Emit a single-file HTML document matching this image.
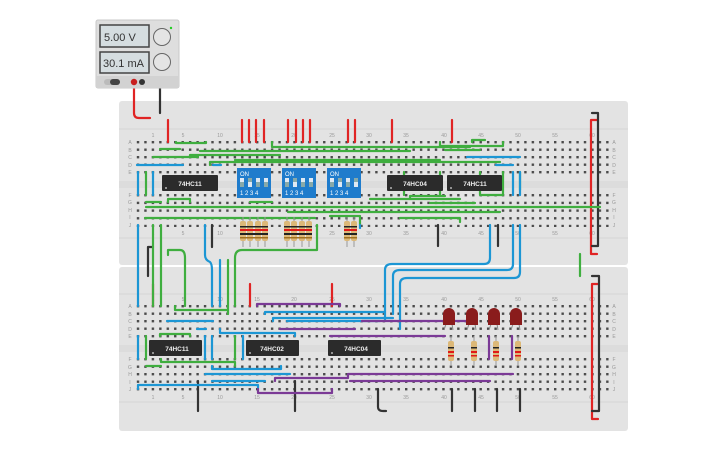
<!DOCTYPE html>
<html><head><meta charset="utf-8"><style>
html,body{margin:0;padding:0;background:#fff;width:725px;height:453px;overflow:hidden}
svg{display:block}
text{font-family:"Liberation Sans",sans-serif}
</style></head><body>
<svg width="725" height="453" viewBox="0 0 725 453" xmlns="http://www.w3.org/2000/svg">
<defs>
<pattern id="hp" patternUnits="userSpaceOnUse" x="136.8" y="141" width="7.45" height="7.5"><rect x="0" y="0" width="2.4" height="2.4" fill="#4a4a4a"/></pattern>
<pattern id="rp" patternUnits="userSpaceOnUse" x="152.8" y="0" width="45.3" height="453"><rect x="0" y="0" width="2.4" height="2.4" fill="#4a4a4a"/><rect x="7.5" y="0" width="2.4" height="2.4" fill="#4a4a4a"/><rect x="15" y="0" width="2.4" height="2.4" fill="#4a4a4a"/><rect x="22.5" y="0" width="2.4" height="2.4" fill="#4a4a4a"/><rect x="30" y="0" width="2.4" height="2.4" fill="#4a4a4a"/></pattern>
<pattern id="hp2" patternUnits="userSpaceOnUse" x="136.8" y="305" width="7.45" height="7.5"><rect x="0" y="0" width="2.4" height="2.4" fill="#4a4a4a"/></pattern>
<pattern id="hp3" patternUnits="userSpaceOnUse" x="136.8" y="358" width="7.45" height="7.5"><rect x="0" y="0" width="2.4" height="2.4" fill="#4a4a4a"/></pattern>
<pattern id="hp4" patternUnits="userSpaceOnUse" x="136.8" y="194" width="7.45" height="7.7"><rect x="0" y="0" width="2.4" height="2.4" fill="#4a4a4a"/></pattern>
</defs>

<!-- boards -->
<rect x="119" y="101" width="509" height="164" rx="3" fill="#e3e3e3"/>
<rect x="119" y="267" width="509" height="164" rx="3" fill="#e3e3e3"/>
<line x1="119" y1="129" x2="628" y2="129" stroke="#d6d6d6"/>
<line x1="119" y1="238" x2="628" y2="238" stroke="#d6d6d6"/>
<line x1="119" y1="294" x2="628" y2="294" stroke="#d6d6d6"/>
<line x1="119" y1="402" x2="628" y2="402" stroke="#d6d6d6"/>
<rect x="119" y="181" width="509" height="7" fill="#dcdcdc"/>
<rect x="119" y="345" width="509" height="7" fill="#dcdcdc"/>

<!-- holes -->
<rect x="136" y="141" width="474" height="35" fill="url(#hp)"/>
<rect x="136" y="194" width="474" height="33" fill="url(#hp4)"/>
<rect x="136" y="305" width="474" height="35" fill="url(#hp2)"/>
<rect x="136" y="358" width="474" height="33" fill="url(#hp3)"/>
<rect x="152" y="112" width="440" height="2.4" fill="url(#rp)"/>
<rect x="152" y="119" width="440" height="2.4" fill="url(#rp)"/>
<rect x="152" y="245" width="440" height="2.4" fill="url(#rp)"/>
<rect x="152" y="253" width="440" height="2.4" fill="url(#rp)"/>
<rect x="152" y="275" width="440" height="2.4" fill="url(#rp)"/>
<rect x="152" y="283" width="440" height="2.4" fill="url(#rp)"/>
<rect x="152" y="410" width="440" height="2.4" fill="url(#rp)"/>
<rect x="152" y="418" width="440" height="2.4" fill="url(#rp)"/>

<!-- labels -->
<g font-size="5" fill="#999" text-anchor="middle">
<text x="153" y="137">1</text><text x="183" y="137">5</text><text x="220" y="137">10</text><text x="257" y="137">15</text><text x="294" y="137">20</text><text x="332" y="137">25</text><text x="369" y="137">30</text><text x="406" y="137">35</text><text x="444" y="137">40</text><text x="481" y="137">45</text><text x="518" y="137">50</text><text x="555" y="137">55</text><text x="592" y="137">60</text>
<text x="153" y="235">1</text><text x="183" y="235">5</text><text x="220" y="235">10</text><text x="257" y="235">15</text><text x="294" y="235">20</text><text x="332" y="235">25</text><text x="369" y="235">30</text><text x="406" y="235">35</text><text x="444" y="235">40</text><text x="481" y="235">45</text><text x="518" y="235">50</text><text x="555" y="235">55</text><text x="592" y="235">60</text>
<text x="153" y="301">1</text><text x="183" y="301">5</text><text x="220" y="301">10</text><text x="257" y="301">15</text><text x="294" y="301">20</text><text x="332" y="301">25</text><text x="369" y="301">30</text><text x="406" y="301">35</text><text x="444" y="301">40</text><text x="481" y="301">45</text><text x="518" y="301">50</text><text x="555" y="301">55</text><text x="592" y="301">60</text>
<text x="153" y="399">1</text><text x="183" y="399">5</text><text x="220" y="399">10</text><text x="257" y="399">15</text><text x="294" y="399">20</text><text x="332" y="399">25</text><text x="369" y="399">30</text><text x="406" y="399">35</text><text x="444" y="399">40</text><text x="481" y="399">45</text><text x="518" y="399">50</text><text x="555" y="399">55</text><text x="592" y="399">60</text>
<text x="130" y="144">A</text><text x="130" y="152">B</text><text x="130" y="159">C</text><text x="130" y="167">D</text><text x="130" y="174">E</text><text x="130" y="197">F</text><text x="130" y="204">G</text><text x="130" y="212">H</text><text x="130" y="219">I</text><text x="130" y="227">J</text>
<text x="614" y="144">A</text><text x="614" y="152">B</text><text x="614" y="159">C</text><text x="614" y="167">D</text><text x="614" y="174">E</text><text x="614" y="197">F</text><text x="614" y="204">G</text><text x="614" y="212">H</text><text x="614" y="219">I</text><text x="614" y="227">J</text>
<text x="130" y="308">A</text><text x="130" y="316">B</text><text x="130" y="323">C</text><text x="130" y="331">D</text><text x="130" y="338">E</text><text x="130" y="361">F</text><text x="130" y="369">G</text><text x="130" y="376">H</text><text x="130" y="384">I</text><text x="130" y="391">J</text>
<text x="614" y="308">A</text><text x="614" y="316">B</text><text x="614" y="323">C</text><text x="614" y="331">D</text><text x="614" y="338">E</text><text x="614" y="361">F</text><text x="614" y="369">G</text><text x="614" y="376">H</text><text x="614" y="384">I</text><text x="614" y="391">J</text>
</g>

<!-- wires -->
<g fill="none" stroke-width="2.2" stroke-linecap="round" stroke-linejoin="round">
<!-- red -->
<g stroke="#e02424">
<path d="M134,82 V113 Q134,118 139,118 H150"/>
<path d="M168,120 V142"/>
<path d="M242,120V142M249,120V142M256,120V142M264,120V142"/>
<path d="M288,120V142M296,120V142M303,120V142M310,120V142"/>
<path d="M348,120V142M355,120V142M392,120V142M452,120V142"/>
<path d="M597,120 H591 V254 H597"/>
<path d="M153,284V306M250,284V306M332,284V306"/>
<path d="M598,284 H592 V419 H598"/>
</g>
<!-- black -->
<g stroke="#333">
<path d="M142,82 H155 Q160,82 160,88 V113"/>
<path d="M592,113 H598 V246 H592"/>
<path d="M212,225V247M438,225V246M498,225V246"/>
<path d="M153,247 H148 V276"/>
<path d="M592,276 H599 V411 H592"/>
<path d="M198,381V411M295,381V411M452,389V411M475,389V411M497,389V411M520,389V411"/>
<path d="M378,389 V407 Q378,411 383,411 H386"/>
</g>
<!-- green -->
<g stroke="#3fae3f">
<path d="M160,149 H180"/>
<path d="M176,142 V143 H206 V142"/>
<path d="M153,157 H198"/>
<path d="M190,157 V155 H280"/>
<path d="M272,142 V147 H470"/>
<path d="M200,151 H410"/>
<path d="M235,160 H440"/>
<path d="M210,165 V162 H500"/>
<path d="M440,142 V146 H503 V142"/>
<path d="M472,142 V140 H485"/>
<path d="M445,150 H480"/>
<path d="M146,202 H161"/>
<path d="M168,202 V199 H190 V202"/>
<path d="M250,202 H272"/>
<path d="M146,207 H600"/>
<path d="M288,212 H500"/>
<path d="M370,199 H460"/>
<path d="M410,199 V196 H445"/>
<path d="M430,203 H475"/>
<path d="M145,218 H315"/>
<path d="M400,218 H460 V222"/>
<path d="M480,172 V195 H503 V172"/>
<path d="M440,172 V195"/>
<path d="M404,172 V195"/>
<path d="M146,172 V195"/>
<path d="M153,225 V306"/>
<path d="M161,225 V306"/>
<path d="M168,255 V250 H180 Q185,250 185,258 V306"/>
<path d="M317,225 V250 H242 Q235,250 235,258 V306"/>
<path d="M228,260 V314"/>
<path d="M360,225 V216 H330"/>
<path d="M580,254 V276"/>
<path d="M175,306 V310 H228"/>
<path d="M160,336 V334 H190 V336"/>
<path d="M146,336 V359"/>
<path d="M235,336 V359"/>
<path d="M161,359 V362 H235 V366"/>
<path d="M146,366 H161"/>
<path d="M520,172 V190"/>
</g>
<!-- blue -->
<g stroke="#1c96d4">
<path d="M137,165 H183"/>
<path d="M213,165 H221"/>
<path d="M138,172V195M153,172V195"/>
<path d="M467,157 H520"/>
<path d="M496,165 H513"/>
<path d="M513,172V195M520,172V195"/>
<path d="M138,225 V306"/>
<path d="M205,225 V255 Q205,260 210,262 Q212,264 212,270 V306"/>
<path d="M220,260 V306"/>
<path d="M490,225 V258 Q490,264 484,264 H392 Q385,264 385,270 V321"/>
<path d="M513,225 V264 Q513,270 507,270 H400 Q393,270 393,276 V314"/>
<path d="M520,225 V272 Q520,278 514,278 H407 Q400,278 400,284 V329"/>
<path d="M265,314 V312 H385"/>
<path d="M273,321 V318 H393"/>
<path d="M167,321 H213"/>
<path d="M197,329 H206"/>
<path d="M220,329 V333 H295 V336"/>
<path d="M287,321 H380"/>
<path d="M138,336V359M205,336V359M212,336V359M243,336V359"/>
<path d="M212,366 V369 H281 V366"/>
<path d="M205,374 H290"/>
<path d="M212,381 H265"/>
<path d="M138,389 V385 H258 V389"/>
<path d="M360,225 V228"/>
</g>
<!-- purple -->
<g stroke="#7b3a96">
<path d="M257,306 V304 H340 V306"/>
<path d="M280,329 H355"/>
<path d="M362,321 H470"/>
<path d="M330,336 H445"/>
<path d="M489,336V359M512,336V359"/>
<path d="M275,381 V378 H348 V374 H513"/>
<path d="M350,381 H490"/>
<path d="M258,389 V393 H332 V389"/>
</g>
</g>

<!-- DIP switches -->
<g>
<rect x="237" y="168" width="34" height="30" fill="#1f7ccc"/>
<rect x="282" y="168" width="34" height="30" fill="#1f7ccc"/>
<rect x="327" y="168" width="34" height="30" fill="#1f7ccc"/>
<g fill="#fff" font-size="6">
<text x="240" y="176">ON</text><text x="285" y="176">ON</text><text x="330" y="176">ON</text>
<text x="240" y="195">1 2 3 4</text><text x="285" y="195">1 2 3 4</text><text x="330" y="195">1 2 3 4</text>
</g>
<g fill="#dfe9f3">
<rect x="240" y="178" width="4" height="9"/><rect x="248" y="178" width="4" height="9"/><rect x="256" y="178" width="4" height="9"/><rect x="264" y="178" width="4" height="9"/>
<rect x="285" y="178" width="4" height="9"/><rect x="293" y="178" width="4" height="9"/><rect x="301" y="178" width="4" height="9"/><rect x="309" y="178" width="4" height="9"/>
<rect x="330" y="178" width="4" height="9"/><rect x="338" y="178" width="4" height="9"/><rect x="346" y="178" width="4" height="9"/><rect x="354" y="178" width="4" height="9"/>
</g>
<g fill="#8aa">
<rect x="240" y="182" width="4" height="5"/><rect x="248" y="178" width="4" height="4"/><rect x="256" y="182" width="4" height="5"/><rect x="264" y="182" width="4" height="5"/>
<rect x="285" y="182" width="4" height="5"/><rect x="293" y="178" width="4" height="4"/><rect x="301" y="182" width="4" height="5"/><rect x="309" y="182" width="4" height="5"/>
<rect x="330" y="182" width="4" height="5"/><rect x="338" y="178" width="4" height="4"/><rect x="346" y="182" width="4" height="5"/><rect x="354" y="178" width="4" height="4"/>
</g>
</g>

<!-- chips -->
<g font-size="6.5" fill="#eee" text-anchor="middle" font-weight="bold">
<rect x="162" y="175" width="56" height="16" rx="1" fill="#2b2b2b"/><text x="190" y="186">74HC11</text>
<rect x="387" y="175" width="56" height="16" rx="1" fill="#2b2b2b"/><text x="415" y="186">74HC04</text>
<rect x="447" y="175" width="55" height="16" rx="1" fill="#2b2b2b"/><text x="475" y="186">74HC11</text>
<rect x="149" y="340" width="53" height="16" rx="1" fill="#2b2b2b"/><text x="177" y="351">74HC11</text>
<rect x="246" y="340" width="53" height="16" rx="1" fill="#2b2b2b"/><text x="272" y="351">74HC02</text>
<rect x="328" y="340" width="53" height="16" rx="1" fill="#2b2b2b"/><text x="356" y="351">74HC04</text>
</g>
<g fill="#ddd"><circle cx="166" cy="188" r="0.9"/><circle cx="391" cy="188" r="0.9"/><circle cx="451" cy="188" r="0.9"/><circle cx="153" cy="353" r="0.9"/><circle cx="250" cy="353" r="0.9"/><circle cx="332" cy="353" r="0.9"/></g>

<!-- resistors -->
<g id="res">
<g stroke="#999" stroke-width="1">
<path d="M243,217V247M250,217V247M258,217V247M265,217V247M287,217V247M294,217V247M302,217V247M309,217V247M347,217V247M354,217V247"/>
<path d="M451,336V366M474,336V366M496,336V366M518,336V366"/>
</g>
<g fill="#dcb878">
<rect x="240" y="221" width="6" height="20" rx="2"/><rect x="247" y="221" width="6" height="20" rx="2"/><rect x="255" y="221" width="6" height="20" rx="2"/><rect x="262" y="221" width="6" height="20" rx="2"/>
<rect x="284" y="221" width="6" height="20" rx="2"/><rect x="291" y="221" width="6" height="20" rx="2"/><rect x="299" y="221" width="6" height="20" rx="2"/><rect x="306" y="221" width="6" height="20" rx="2"/>
<rect x="344" y="221" width="6" height="20" rx="2"/><rect x="351" y="221" width="6" height="20" rx="2"/>
<rect x="448" y="341" width="6" height="20" rx="2"/><rect x="471" y="341" width="6" height="20" rx="2"/><rect x="493" y="341" width="6" height="20" rx="2"/><rect x="515" y="341" width="6" height="20" rx="2"/>
</g>
<g fill="#e01818">
<rect x="240" y="229" width="28" height="2"/><rect x="284" y="229" width="28" height="2"/><rect x="344" y="229" width="13" height="2"/>
<rect x="448" y="351" width="6" height="2"/><rect x="471" y="351" width="6" height="2"/><rect x="493" y="351" width="6" height="2"/><rect x="515" y="351" width="6" height="2"/>
<rect x="448" y="355" width="6" height="1.5"/><rect x="471" y="355" width="6" height="1.5"/><rect x="493" y="355" width="6" height="1.5"/><rect x="515" y="355" width="6" height="1.5"/>
</g>
<g fill="#222">
<rect x="240" y="233" width="28" height="2"/><rect x="284" y="233" width="28" height="2"/><rect x="344" y="233" width="13" height="2"/>
<rect x="240" y="226" width="28" height="1.5"/><rect x="284" y="226" width="28" height="1.5"/><rect x="344" y="226" width="13" height="1.5"/>
<rect x="448" y="347" width="6" height="1.5"/><rect x="471" y="347" width="6" height="1.5"/><rect x="493" y="347" width="6" height="1.5"/><rect x="515" y="347" width="6" height="1.5"/>
</g>
<g fill="#a07020"><rect x="240" y="237" width="28" height="1.5"/><rect x="284" y="237" width="28" height="1.5"/><rect x="344" y="237" width="13" height="1.5"/></g>
</g>

<!-- LEDs -->
<g stroke="#888" stroke-width="1"><path d="M446,324l-2,6M452,324l1,6M469,324l-2,6M475,324l1,6M491,324l-2,6M497,324l1,6M513,324l-2,6M519,324l1,6"/></g>
<g fill="#8a1c1c">
<path d="M443,325 V314 a6,6 0 0 1 12,0 V325 Z"/>
<path d="M466,325 V314 a6,6 0 0 1 12,0 V325 Z"/>
<path d="M488,325 V314 a6,6 0 0 1 12,0 V325 Z"/>
<path d="M510,325 V314 a6,6 0 0 1 12,0 V325 Z"/>
</g>

<!-- power supply -->
<rect x="96" y="20" width="83" height="68" rx="2" fill="#dedede" stroke="#c8c8c8"/>
<rect x="96" y="76" width="83" height="12" fill="#d2d2d2"/>
<rect x="100" y="25" width="49" height="22" fill="#d5dde0" stroke="#444" stroke-width="1.5"/>
<rect x="100" y="52" width="49" height="21" fill="#d5dde0" stroke="#444" stroke-width="1.5"/>
<text x="104" y="41" font-size="11" fill="#333">5.00 V</text>
<text x="103" y="67" font-size="11" fill="#333">30.1 mA</text>
<circle cx="162" cy="37" r="8.5" fill="#e4e4e4" stroke="#666"/>
<circle cx="162" cy="62" r="8.5" fill="#e4e4e4" stroke="#666"/>
<circle cx="171" cy="28" r="1.2" fill="#2c2"/>
<rect x="104" y="79" width="16" height="6" rx="3" fill="#bbb"/>
<rect x="110" y="79" width="10" height="6" rx="3" fill="#444"/>
<circle cx="134" cy="82" r="3.2" fill="#c81e1e"/>
<circle cx="142" cy="82" r="3" fill="#333"/>
</svg>
</body></html>
